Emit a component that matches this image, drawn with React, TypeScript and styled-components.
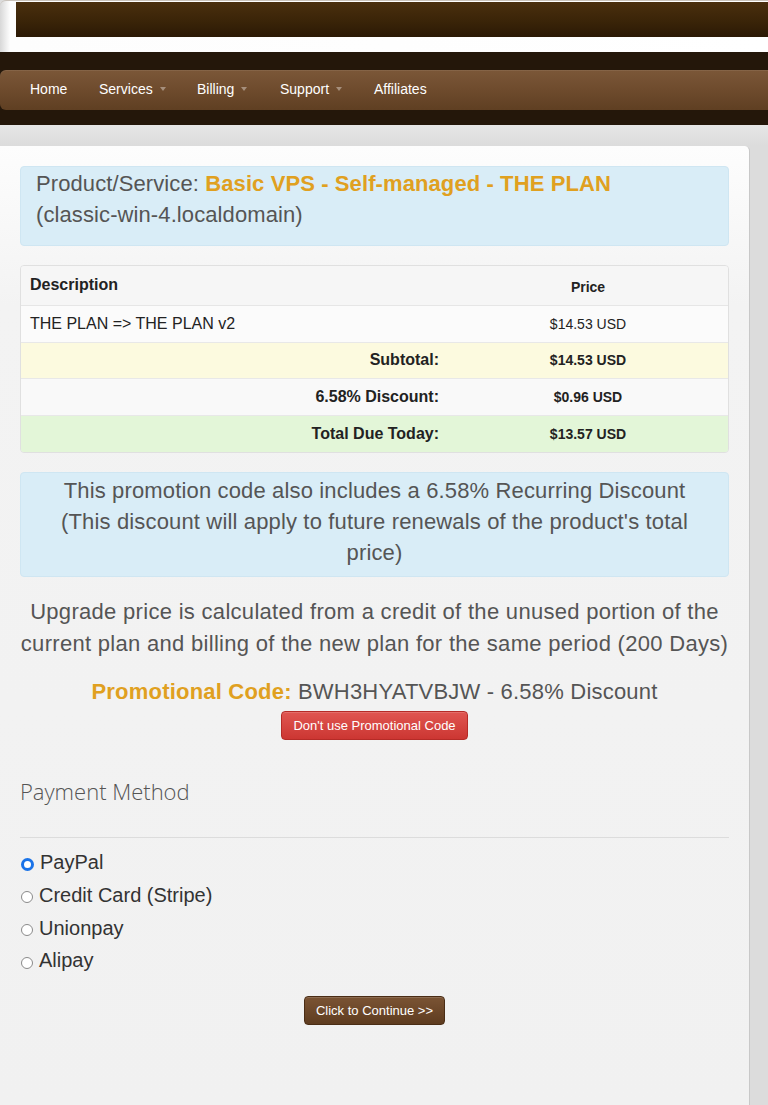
import React, { useState } from 'react'
import styled, { createGlobalStyle } from 'styled-components'

const GlobalStyle = createGlobalStyle`
  html, body {
    margin: 0;
    padding: 0;
    background: #dcdcdc;
    font-family: "Liberation Sans", Arial, sans-serif;
  }
`

const Page = styled.div`
  width: 768px;
  min-height: 1105px;
  background: #dcdcdc;
  overflow: hidden;
`

const Header = styled.div`
  height: 52px;
  background: linear-gradient(to right, #d8d8d8 0px, #fdfdfd 10px, #ffffff 100%);
  border-top: 1px solid #c9c2ba;
  border-radius: 6px 0 0 0;
  padding: 1px 0 0 16px;
  box-sizing: border-box;
`

const Banner = styled.div`
  height: 35px;
  background: linear-gradient(to bottom, #4a2f0e 0%, #3a2408 55%, #2b1905 100%);
`

const NavBand = styled.div`
  background: #24170a;
  padding: 18px 0 15px;
`

const NavBar = styled.nav`
  height: 40px;
  box-sizing: border-box;
  padding: 0 0 3px 30px;
  display: flex;
  align-items: center;
  border-radius: 6px 0 0 6px;
  background: linear-gradient(to bottom, #7b5738 0%, #6e4b2d 50%, #5f3f22 100%);
  box-shadow: inset 0 1px 0 rgba(255, 255, 255, 0.08);
`

const NavItem = styled.span<{ $w: number }>`
  width: ${(p) => p.$w}px;
  color: #ffffff;
  font-size: 14px;
  display: flex;
  align-items: center;
  gap: 7px;
`

const Caret = styled.span`
  width: 0;
  height: 0;
  border-left: 3.5px solid transparent;
  border-right: 3.5px solid transparent;
  border-top: 4px solid #a68f7c;
  margin-top: 1px;
`

const Main = styled.div`
  padding: 21px 18px 0 0;
  background: linear-gradient(to bottom, #e6e6e6 0px, #dcdcdc 20px);
`

const Card = styled.div`
  min-height: 959px;
  box-sizing: border-box;
  background: linear-gradient(to bottom, #fdfdfd 0px, #f3f3f3 160px, #f1f1f1 100%);
  border-radius: 0 5px 0 0;
  border-right: 1px solid #c8c8c8;
  padding: 20px 20px 40px;
  color: #555;
`

const InfoBox = styled.div<{ $center?: boolean }>`
  background: #d9edf7;
  border: 1px solid #cfe6f2;
  border-radius: 4px;
  padding: ${(p) => (p.$center ? '2px 16px 8px' : '1px 15px 15px')};
  font-size: 22px;
  letter-spacing: ${(p) => (p.$center ? '0.15px' : '0.1px')};
  line-height: 31px;
  color: #555;
  text-align: ${(p) => (p.$center ? 'center' : 'left')};
  margin-bottom: 19px;
`

const Accent = styled.span`
  color: #e0a020;
  font-weight: bold;
`

const Table = styled.table`
  width: 100%;
  border-collapse: separate;
  border-spacing: 0;
  border: 1px solid #e0e0e0;
  border-radius: 4px;
  overflow: hidden;
  margin-bottom: 19px;
  color: #222;
`

const Th = styled.th<{ $center?: boolean }>`
  height: 36px;
  text-align: ${(p) => (p.$center ? 'center' : 'left')};
  padding: ${(p) => (p.$center ? '3px 9px 0' : '0 9px 2px')};
  font-size: ${(p) => (p.$center ? '14px' : '16px')};
  background: #f6f6f6;
  border-bottom: 1px solid #e6e6e6;
`

const Row = styled.tr<{ $bg: string }>`
  background: ${(p) => p.$bg};
`

const Td = styled.td<{ $align: 'left' | 'right' | 'center'; $bold?: boolean }>`
  height: 36.6px;
  box-sizing: border-box;
  padding: 0 9px;
  text-align: ${(p) => p.$align};
  font-size: ${(p) => (p.$align === 'center' ? '14px' : '16px')};
  font-weight: ${(p) => (p.$bold ? 'bold' : 'normal')};
  border-bottom: 1px solid #e8e8e8;
  tr:last-child > & {
    border-bottom: none;
  }
`

const Paragraph = styled.p`
  margin: 0 -4px 19px;
  text-align: center;
  font-size: 22px;
  letter-spacing: 0.3px;
  line-height: 32px;
  color: #555;
`

const PromoLine = styled.div`
  text-align: center;
  font-size: 22px;
  letter-spacing: 0.2px;
  line-height: 26px;
  color: #555;
  margin-bottom: 6px;
`

const ButtonRow = styled.div<{ $mb: number }>`
  display: flex;
  justify-content: center;
  margin-bottom: ${(p) => p.$mb}px;
`

const Button = styled.button<{ $variant: 'danger' | 'brown' }>`
  height: 29px;
  padding: 0 11px;
  border-radius: 4px;
  border: 1px solid ${(p) => (p.$variant === 'danger' ? '#b52b27' : '#4a2d15')};
  color: #fff;
  font-family: "Liberation Sans", Arial, sans-serif;
  font-size: 13px;
  background: ${(p) =>
    p.$variant === 'danger'
      ? 'linear-gradient(to bottom, #e05651 0%, #cc3632 100%)'
      : 'linear-gradient(to bottom, #7b5434 0%, #5e3c20 100%)'};
  box-shadow: inset 0 1px 0 rgba(255, 255, 255, 0.15);
  cursor: pointer;
`

const SectionTitle = styled.h3`
  margin: 0 0 8px;
  padding-bottom: 31px;
  font-family: "Open Sans", sans-serif;
  font-weight: 300;
  font-size: 22px;
  color: #555;
  border-bottom: 1px solid #dcdcdc;
`

const RadioList = styled.div`
  display: flex;
  flex-direction: column;
  margin-bottom: 19px;
`

const RadioLabel = styled.label`
  display: flex;
  align-items: center;
  height: 32.7px;
  font-size: 20px;
  color: #333;
  cursor: pointer;
`

const RadioDot = styled.span<{ $on: boolean }>`
  width: ${(p) => (p.$on ? '7px' : '10px')};
  height: ${(p) => (p.$on ? '7px' : '10px')};
  border-radius: 50%;
  border: ${(p) => (p.$on ? '3px solid #1a73e8' : '1px solid #8a8a8a')};
  background: #fff;
  margin: 4px 6px 0 1px;
  flex-shrink: 0;
`

const navItems = [
  { label: 'Home', w: 69, caret: false },
  { label: 'Services', w: 98, caret: true },
  { label: 'Billing', w: 83, caret: true },
  { label: 'Support', w: 94, caret: true },
  { label: 'Affiliates', w: 80, caret: false },
]

const methods = ['PayPal', 'Credit Card (Stripe)', 'Unionpay', 'Alipay']

export default function App() {
  const [method, setMethod] = useState('PayPal')

  return (
    <Page>
      <GlobalStyle />
      <Header>
        <Banner />
      </Header>
      <NavBand>
        <NavBar>
          {navItems.map((item) => (
            <NavItem key={item.label} $w={item.w}>
              {item.label}
              {item.caret && <Caret />}
            </NavItem>
          ))}
        </NavBar>
      </NavBand>
      <Main>
        <Card>
          <InfoBox>
            Product/Service: <Accent>Basic VPS - Self-managed - THE PLAN</Accent>
            <br />
            (classic-win-4.localdomain)
          </InfoBox>

          <Table>
            <thead>
              <tr>
                <Th>Description</Th>
                <Th $center style={{ width: 262 }}>
                  Price
                </Th>
              </tr>
            </thead>
            <tbody>
              <Row $bg="#fbfbfb">
                <Td $align="left">THE PLAN =&gt; THE PLAN v2</Td>
                <Td $align="center">$14.53 USD</Td>
              </Row>
              <Row $bg="#fcfadf">
                <Td $align="right" $bold>
                  Subtotal:
                </Td>
                <Td $align="center" $bold>
                  $14.53 USD
                </Td>
              </Row>
              <Row $bg="#f9f9f9">
                <Td $align="right" $bold>
                  6.58% Discount:
                </Td>
                <Td $align="center" $bold>
                  $0.96 USD
                </Td>
              </Row>
              <Row $bg="#e3f6d8">
                <Td $align="right" $bold>
                  Total Due Today:
                </Td>
                <Td $align="center" $bold>
                  $13.57 USD
                </Td>
              </Row>
            </tbody>
          </Table>

          <InfoBox $center>
            This promotion code also includes a 6.58% Recurring Discount
            <br />
            (This discount will apply to future renewals of the product's total price)
          </InfoBox>

          <Paragraph>
            Upgrade price is calculated from a credit of the unused portion of the
            <br />
            current plan and billing of the new plan for the same period (200 Days)
          </Paragraph>

          <PromoLine>
            <Accent>Promotional Code:</Accent> BWH3HYATVBJW - 6.58% Discount
          </PromoLine>
          <ButtonRow $mb={36}>
            <Button $variant="danger">Don't use Promotional Code</Button>
          </ButtonRow>

          <SectionTitle>Payment Method</SectionTitle>
          <RadioList>
            {methods.map((m) => (
              <RadioLabel key={m} onClick={() => setMethod(m)}>
                <RadioDot $on={method === m} />
                {m}
              </RadioLabel>
            ))}
          </RadioList>

          <ButtonRow $mb={0}>
            <Button $variant="brown">Click to Continue &gt;&gt;</Button>
          </ButtonRow>
        </Card>
      </Main>
    </Page>
  )
}
